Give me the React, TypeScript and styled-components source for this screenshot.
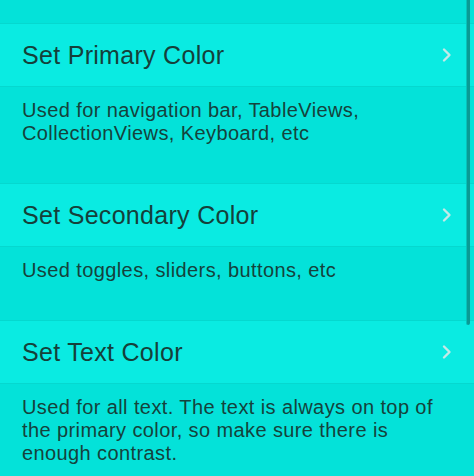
import React from "react";
import styled, { createGlobalStyle } from "styled-components";

const GlobalStyle = createGlobalStyle`
	html, body {
		margin: 0;
		padding: 0;
		background: #04e2d9;
	}
	body {
		font-family: "Liberation Sans", Arial, sans-serif;
		-webkit-font-smoothing: antialiased;
	}
`;

interface Setting {
	title: string;
	note: string;
}

const settings: Setting[] = [
	{ title: "Set Primary Color", note: "Used for navigation bar, TableViews, CollectionViews, Keyboard, etc" },
	{ title: "Set Secondary Color", note: "Used toggles, sliders, buttons, etc" },
	{ title: "Set Text Color", note: "Used for all text. The text is always on top of the primary color, so make sure there is enough contrast." },
];

function Chevron() {
	return (
		<svg width="12" height="16" viewBox="0 0 12 16" fill="none">
			<path d="M3 2.5 L8.5 8 L3 13.5" stroke="#c4e9e7" strokeWidth="2.4" strokeLinecap="round" strokeLinejoin="round" />
		</svg>
	);
}

export default function App() {
	return (
		<>
			<GlobalStyle />
			<Screen>
				<Table>
					{settings.map((s, idx) => (
						<Section key={s.title} first={idx === 0}>
							<Cell>
								<CellTitle>{s.title}</CellTitle>
								<Chevron />
							</Cell>
							<Footer>{s.note}</Footer>
						</Section>
					))}
				</Table>
				<ScrollIndicator />
			</Screen>
		</>
	);
}

const Screen = styled.div`
	position: relative;
	width: 474px;
	height: 476px;
	overflow: hidden;
	background: #04e2d9;
`;

const Table = styled.div`
	display: flex;
	flex-direction: column;
`;

const Section = styled.section<{ first: boolean }>`
	display: flex;
	flex-direction: column;
	padding-top: ${(props) => (props.first ? "23px" : "0")};
`;

const Cell = styled.div`
	display: flex;
	align-items: center;
	justify-content: space-between;
	height: 62px;
	padding: 0 21px 0 22px;
	background: #0aebe2;
	border-top: 1px solid #05d8cf;
	border-bottom: 1px solid #05d8cf;
`;

const CellTitle = styled.span`
	font-size: 25px;
	color: #15403a;
	letter-spacing: 0.3px;
	padding-top: 1px;
`;

const Footer = styled.p`
	margin: 0;
	padding: 12px 20px 38px 22px;
	font-size: 20px;
	line-height: 23px;
	letter-spacing: 0.4px;
	color: #15423c;
`;

const ScrollIndicator = styled.div`
	position: absolute;
	top: 0;
	right: 4px;
	width: 3px;
	height: 325px;
	background: #0a9a94;
	border-left: 1px solid #07c2ba;
	border-radius: 0 0 2px 2px;
`;
